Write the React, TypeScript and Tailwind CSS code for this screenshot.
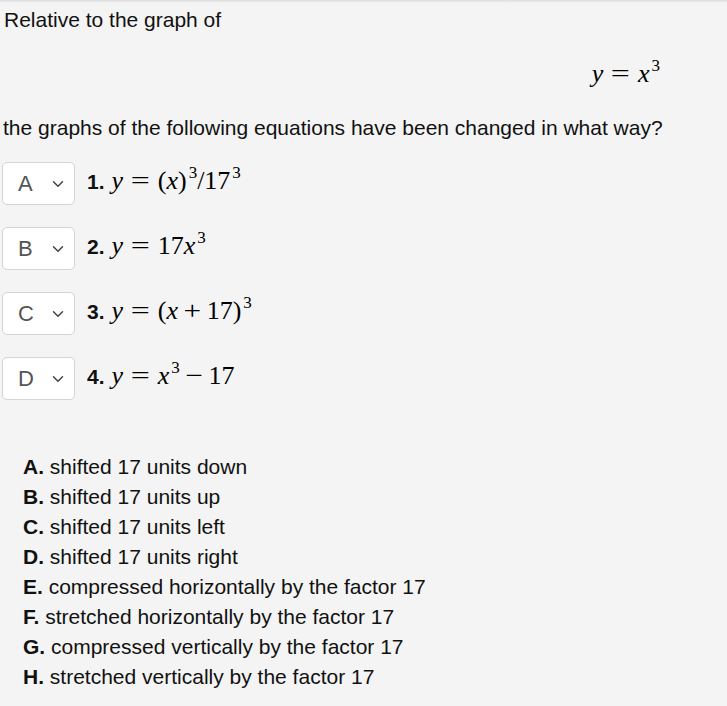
import { ChevronDown } from "lucide-react";

const V = ({ children }: { children: React.ReactNode }) => (
  <span className="italic">{children}</span>
);

const Sup = ({ children }: { children: React.ReactNode }) => (
  <sup className="text-[17px] -top-[11px] ml-[2px]">{children}</sup>
);

const Rel = ({ children }: { children: React.ReactNode }) => (
  <span className="inline-block mx-[10px] scale-x-[1.3]">{children}</span>
);

const Bin = ({ children }: { children: React.ReactNode }) => (
  <span className="inline-block mx-[7px] scale-x-[1.2]">{children}</span>
);

const Eq = ({ children }: { children: React.ReactNode }) => (
  <span className="font-['Liberation_Serif',serif] text-[26px] leading-none text-black whitespace-nowrap">
    {children}
  </span>
);

const rows = [
  {
    letter: "A",
    num: "1.",
    eq: (
      <>
        <V>y</V>
        <Rel>=</Rel>(<V>x</V>)<Sup>3</Sup>/17<Sup>3</Sup>
      </>
    ),
  },
  {
    letter: "B",
    num: "2.",
    eq: (
      <>
        <V>y</V>
        <Rel>=</Rel>17<V>x</V>
        <Sup>3</Sup>
      </>
    ),
  },
  {
    letter: "C",
    num: "3.",
    eq: (
      <>
        <V>y</V>
        <Rel>=</Rel>(<V>x</V>
        <Bin>+</Bin>17)<Sup>3</Sup>
      </>
    ),
  },
  {
    letter: "D",
    num: "4.",
    eq: (
      <>
        <V>y</V>
        <Rel>=</Rel>
        <V>x</V>
        <Sup>3</Sup>
        <Bin>−</Bin>17
      </>
    ),
  },
];

const answers = [
  ["A.", "shifted 17 units down"],
  ["B.", "shifted 17 units up"],
  ["C.", "shifted 17 units left"],
  ["D.", "shifted 17 units right"],
  ["E.", "compressed horizontally by the factor 17"],
  ["F.", "stretched horizontally by the factor 17"],
  ["G.", "compressed vertically by the factor 17"],
  ["H.", "stretched vertically by the factor 17"],
];

export default function App() {
  return (
    <div className="w-[727px] h-[706px] bg-[#f4f4f4] font-['Liberation_Sans',Arial,sans-serif] text-[21px] text-[#111] overflow-hidden">
      <div className="h-[3px] bg-gradient-to-b from-[#dcdcdc] to-[#f4f4f4]" />
      <div className="pl-[4px] pt-[5px] leading-[24px]">Relative to the graph of</div>

      <div className="flex justify-end pr-[67px] mt-[27px] h-[30px] items-center">
        <Eq>
          <V>y</V>
          <Rel>=</Rel>
          <V>x</V>
          <Sup>3</Sup>
        </Eq>
      </div>

      <div className="pl-[3px] mt-[27px] leading-[24px]">
        the graphs of the following equations have been changed in what way?
      </div>

      <div className="flex flex-col gap-[22px] mt-[22px] pl-[2px]">
        {rows.map((r) => (
          <div key={r.letter} className="flex items-center h-[43px]">
            <div className="w-[73px] h-[43px] bg-white border border-[#d4d4d4] rounded-[5px] flex items-center pl-[15px] pr-[7px] justify-between">
              <span className="text-[#555] text-[22px] leading-none">{r.letter}</span>
              <ChevronDown size={18} strokeWidth={2} className="text-[#444]" />
            </div>
            <div className="ml-[12px] flex items-baseline gap-[7px] leading-none -mt-[5px]">
              <span className="font-bold">{r.num}</span>
              <Eq>{r.eq}</Eq>
            </div>
          </div>
        ))}
      </div>

      <div className="mt-[52px] pl-[23px] flex flex-col">
        {answers.map(([k, t]) => (
          <div key={k} className="leading-[30px] whitespace-nowrap">
            <span className="font-bold">{k}</span> {t}
          </div>
        ))}
      </div>
    </div>
  );
}
